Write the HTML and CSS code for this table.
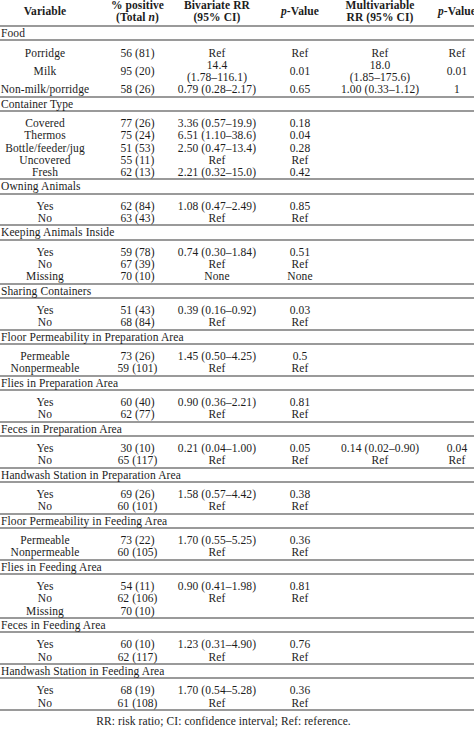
FILE: index.html
```html
<!DOCTYPE html>
<html lang="en">
<head>
<meta charset="utf-8">
<title>Risk factors table</title>
<link rel="stylesheet" href="styles.css">
</head>
<body>
<div class="page">
<table class="t">
<colgroup>
<col class="c1"><col class="c2"><col class="c3"><col class="c4"><col class="c5"><col class="c6">
</colgroup>
<thead>
<tr>
<th>Variable</th>
<th class="n">% positive<br>(Total <i>n</i>)</th>
<th>Bivariate RR<br>(95% CI)</th>
<th><i>p</i>-Value</th>
<th>Multivariable<br>RR (95% CI)</th>
<th><i>p</i>-Value</th>
</tr>
</thead>
<tbody>
<tr class="sh"><td colspan="6">Food</td></tr>
<tr><td>Porridge</td><td class="n">56 (81)</td><td>Ref</td><td>Ref</td><td>Ref</td><td>Ref</td></tr>
<tr><td>Milk</td><td class="n">95 (20)</td><td>14.4<br>(1.78–116.1)</td><td>0.01</td><td>18.0<br>(1.85–175.6)</td><td>0.01</td></tr>
<tr><td>Non-milk/porridge</td><td class="n">58 (26)</td><td>0.79 (0.28–2.17)</td><td>0.65</td><td>1.00 (0.33–1.12)</td><td>1</td></tr>
</tbody>
<tbody>
<tr class="sh"><td colspan="6">Container Type</td></tr>
<tr><td>Covered</td><td class="n">77 (26)</td><td>3.36 (0.57–19.9)</td><td>0.18</td><td></td><td></td></tr>
<tr><td>Thermos</td><td class="n">75 (24)</td><td>6.51 (1.10–38.6)</td><td>0.04</td><td></td><td></td></tr>
<tr><td>Bottle/feeder/jug</td><td class="n">51 (53)</td><td>2.50 (0.47–13.4)</td><td>0.28</td><td></td><td></td></tr>
<tr><td>Uncovered</td><td class="n">55 (11)</td><td>Ref</td><td>Ref</td><td></td><td></td></tr>
<tr><td>Fresh</td><td class="n">62 (13)</td><td>2.21 (0.32–15.0)</td><td>0.42</td><td></td><td></td></tr>
</tbody>
<tbody>
<tr class="sh"><td colspan="6">Owning Animals</td></tr>
<tr><td>Yes</td><td class="n">62 (84)</td><td>1.08 (0.47–2.49)</td><td>0.85</td><td></td><td></td></tr>
<tr><td>No</td><td class="n">63 (43)</td><td>Ref</td><td>Ref</td><td></td><td></td></tr>
</tbody>
<tbody>
<tr class="sh"><td colspan="6">Keeping Animals Inside</td></tr>
<tr><td>Yes</td><td class="n">59 (78)</td><td>0.74 (0.30–1.84)</td><td>0.51</td><td></td><td></td></tr>
<tr><td>No</td><td class="n">67 (39)</td><td>Ref</td><td>Ref</td><td></td><td></td></tr>
<tr><td>Missing</td><td class="n">70 (10)</td><td>None</td><td>None</td><td></td><td></td></tr>
</tbody>
<tbody>
<tr class="sh"><td colspan="6">Sharing Containers</td></tr>
<tr><td>Yes</td><td class="n">51 (43)</td><td>0.39 (0.16–0.92)</td><td>0.03</td><td></td><td></td></tr>
<tr><td>No</td><td class="n">68 (84)</td><td>Ref</td><td>Ref</td><td></td><td></td></tr>
</tbody>
<tbody>
<tr class="sh"><td colspan="6">Floor Permeability in Preparation Area</td></tr>
<tr><td>Permeable</td><td class="n">73 (26)</td><td>1.45 (0.50–4.25)</td><td>0.5</td><td></td><td></td></tr>
<tr><td>Nonpermeable</td><td class="n">59 (101)</td><td>Ref</td><td>Ref</td><td></td><td></td></tr>
</tbody>
<tbody>
<tr class="sh"><td colspan="6">Flies in Preparation Area</td></tr>
<tr><td>Yes</td><td class="n">60 (40)</td><td>0.90 (0.36–2.21)</td><td>0.81</td><td></td><td></td></tr>
<tr><td>No</td><td class="n">62 (77)</td><td>Ref</td><td>Ref</td><td></td><td></td></tr>
</tbody>
<tbody>
<tr class="sh"><td colspan="6">Feces in Preparation Area</td></tr>
<tr><td>Yes</td><td class="n">30 (10)</td><td>0.21 (0.04–1.00)</td><td>0.05</td><td>0.14 (0.02–0.90)</td><td>0.04</td></tr>
<tr><td>No</td><td class="n">65 (117)</td><td>Ref</td><td>Ref</td><td>Ref</td><td>Ref</td></tr>
</tbody>
<tbody>
<tr class="sh"><td colspan="6">Handwash Station in Preparation Area</td></tr>
<tr><td>Yes</td><td class="n">69 (26)</td><td>1.58 (0.57–4.42)</td><td>0.38</td><td></td><td></td></tr>
<tr><td>No</td><td class="n">60 (101)</td><td>Ref</td><td>Ref</td><td></td><td></td></tr>
</tbody>
<tbody>
<tr class="sh"><td colspan="6">Floor Permeability in Feeding Area</td></tr>
<tr><td>Permeable</td><td class="n">73 (22)</td><td>1.70 (0.55–5.25)</td><td>0.36</td><td></td><td></td></tr>
<tr><td>Nonpermeable</td><td class="n">60 (105)</td><td>Ref</td><td>Ref</td><td></td><td></td></tr>
</tbody>
<tbody>
<tr class="sh"><td colspan="6">Flies in Feeding Area</td></tr>
<tr><td>Yes</td><td class="n">54 (11)</td><td>0.90 (0.41–1.98)</td><td>0.81</td><td></td><td></td></tr>
<tr><td>No</td><td class="n">62 (106)</td><td>Ref</td><td>Ref</td><td></td><td></td></tr>
<tr><td>Missing</td><td class="n">70 (10)</td><td></td><td></td><td></td><td></td></tr>
</tbody>
<tbody>
<tr class="sh"><td colspan="6">Feces in Feeding Area</td></tr>
<tr><td>Yes</td><td class="n">60 (10)</td><td>1.23 (0.31–4.90)</td><td>0.76</td><td></td><td></td></tr>
<tr><td>No</td><td class="n">62 (117)</td><td>Ref</td><td>Ref</td><td></td><td></td></tr>
</tbody>
<tbody>
<tr class="sh"><td colspan="6">Handwash Station in Feeding Area</td></tr>
<tr><td>Yes</td><td class="n">68 (19)</td><td>1.70 (0.54–5.28)</td><td>0.36</td><td></td><td></td></tr>
<tr><td>No</td><td class="n">61 (108)</td><td>Ref</td><td>Ref</td><td></td><td></td></tr>
</tbody>
</table>
<div class="note"><p>RR: risk ratio; CI: confidence interval; Ref: reference.</p></div>
</div>
</body>
</html>
```

FILE: styles.css
```css
html, body {
  margin: 0;
  padding: 0;
  background: #ffffff;
}
body {
  font-family: "Liberation Serif", "Times New Roman", serif;
  font-size: 11.5px;
  line-height: 12.25px;
  letter-spacing: 0.1px;
  color: #1c1c1c;
}
.page {
  width: 474px;
  height: 730px;
  overflow: hidden;
}
.t {
  table-layout: fixed;
  width: 495px;
  border-collapse: separate;
  border-spacing: 0;
}
.c1 { width: 90px; }
.c2 { width: 85px; }
.c3 { width: 84px; }
.c4 { width: 82px; }
.c5 { width: 78px; }
.c6 { width: 76px; }
.t th {
  font-weight: bold;
  line-height: 11.5px;
  padding: 0 0 2px 0;
  text-align: center;
  vertical-align: middle;
  white-space: nowrap;
}
.t td {
  padding: 0;
  text-align: center;
  vertical-align: middle;
  white-space: nowrap;
}
.t .n {
  padding-left: 10px;
}
.t tr.sh td {
  text-align: left;
  padding-left: 1px;
  border-top: 2px solid #9a9a9a;
  border-bottom: 2px solid #9a9a9a;
}
.t tbody tr:nth-child(2) td {
  padding-top: 5.25px;
}
.t tbody tr:last-child td {
  padding-bottom: 0;
}
.note {
  border-top: 2px solid #9a9a9a;
}
.note p {
  margin: 0;
  width: 447px;
  padding-top: 4px;
  text-align: center;
}
```
